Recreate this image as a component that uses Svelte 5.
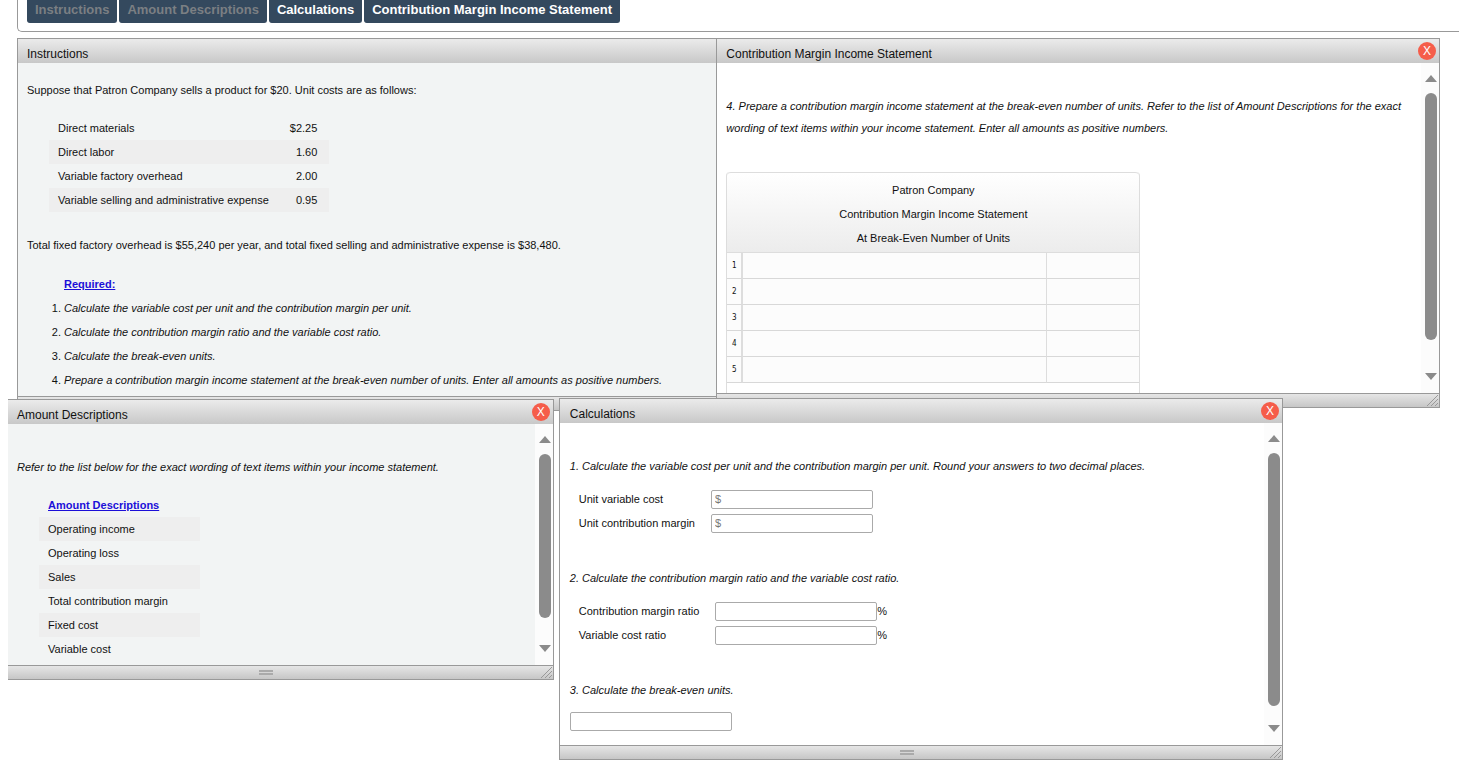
<script lang="ts">
	/**
	 * Worksheet desktop: a strip of tabs over four overlapping windows. Each
	 * window has a title bar, an optional close button and a footer for resizing.
	 */
	import type { Snippet } from 'svelte';

	const tabs = [
		{ name: 'Instructions', open: true },
		{ name: 'Amount Descriptions', open: true },
		{ name: 'Calculations', open: false },
		{ name: 'Contribution Margin Income Statement', open: false }
	];

	const costs = [
		['Direct materials', '$2.25'],
		['Direct labor', '1.60'],
		['Variable factory overhead', '2.00'],
		['Variable selling and administrative expense', '0.95']
	];

	const required = [
		'Calculate the variable cost per unit and the contribution margin per unit.',
		'Calculate the contribution margin ratio and the variable cost ratio.',
		'Calculate the break-even units.',
		'Prepare a contribution margin income statement at the break-even number of units. Enter all amounts as positive numbers.'
	];

	const descriptions = [
		'Operating income',
		'Operating loss',
		'Sales',
		'Total contribution margin',
		'Fixed cost',
		'Variable cost'
	];

	let rows = $state([1, 2, 3, 4, 5].map((n) => ({ n, text: '', amount: '' })));
	let answers = $state({ unitCost: '', unitMargin: '', marginRatio: '', costRatio: '', units: '' });
</script>

{#snippet pane(id: string, title: string, content: Snippet, scrolls: boolean, grip: boolean)}
	<section class="window {id}" aria-labelledby="{id}-title">
		<header>
			<h2 id="{id}-title">{title}</h2>
			{#if scrolls}
				<button class="close" aria-label="Close {title}">X</button>
			{/if}
		</header>
		<div class="body">
			<div class="content">{@render content()}</div>
			{#if scrolls}
				<div class="scrollbar" aria-hidden="true">
					<svg viewBox="0 0 12 7"><path d="M6 0 12 7H0Z" /></svg>
					<div class="track"><div class="thumb"></div></div>
					<svg viewBox="0 0 12 7"><path d="M0 0H12L6 7Z" /></svg>
				</div>
			{/if}
		</div>
		<footer>
			{#if grip}<span class="grip"></span>{/if}
			<svg class="corner" viewBox="0 0 13 13" aria-hidden="true">
				<path d="M1 12 12 1M5 12 12 5M9 12 12 9" />
			</svg>
		</footer>
	</section>
{/snippet}

{#snippet instructions()}
	<p>Suppose that Patron Company sells a product for $20. Unit costs are as follows:</p>
	<table class="striped costs">
		<tbody>
			{#each costs as [label, amount]}
				<tr><td>{label}</td><td class="amount">{amount}</td></tr>
			{/each}
		</tbody>
	</table>
	<p>
		Total fixed factory overhead is $55,240 per year, and total fixed selling and administrative
		expense is $38,480.
	</p>
	<div class="required" id="required">
		<a href="#required">Required:</a>
		<ol>
			{#each required as step}
				<li><em>{step}</em></li>
			{/each}
		</ol>
	</div>
{/snippet}

{#snippet statement()}
	<p class="question">
		4. Prepare a contribution margin income statement at the break-even number of units. Refer to the
		list of Amount Descriptions for the exact wording of text items within your income statement. Enter
		all amounts as positive numbers.
	</p>
	<table class="sheet">
		<thead>
			<tr>
				<th colspan="3">
					<div>Patron Company</div>
					<div>Contribution Margin Income Statement</div>
					<div>At Break-Even Number of Units</div>
				</th>
			</tr>
		</thead>
		<tbody>
			{#each rows as row}
				<tr>
					<td class="num">{row.n}</td>
					<td><input aria-label="Description, row {row.n}" bind:value={row.text} /></td>
					<td class="value"><input aria-label="Amount, row {row.n}" bind:value={row.amount} /></td>
				</tr>
			{/each}
		</tbody>
		<tfoot>
			<tr><td colspan="3"></td></tr>
		</tfoot>
	</table>
{/snippet}

{#snippet amounts()}
	<p class="question">
		Refer to the list below for the exact wording of text items within your income statement.
	</p>
	<table class="striped names" id="descriptions">
		<thead>
			<tr><th><a href="#descriptions">Amount Descriptions</a></th></tr>
		</thead>
		<tbody>
			{#each descriptions as name}
				<tr><td>{name}</td></tr>
			{/each}
		</tbody>
	</table>
{/snippet}

{#snippet calculations()}
	<p class="question">
		1. Calculate the variable cost per unit and the contribution margin per unit. Round your answers to
		two decimal places.
	</p>
	<div class="fields">
		<label for="unit-cost">Unit variable cost</label>
		<span><input id="unit-cost" placeholder="$" bind:value={answers.unitCost} /></span>
		<label for="unit-margin">Unit contribution margin</label>
		<span><input id="unit-margin" placeholder="$" bind:value={answers.unitMargin} /></span>
	</div>
	<p class="question">
		2. Calculate the contribution margin ratio and the variable cost ratio.
	</p>
	<div class="fields">
		<label for="margin-ratio">Contribution margin ratio</label>
		<span><input id="margin-ratio" bind:value={answers.marginRatio} />%</span>
		<label for="cost-ratio">Variable cost ratio</label>
		<span><input id="cost-ratio" bind:value={answers.costRatio} />%</span>
	</div>
	<p class="question"><label for="units">3. Calculate the break-even units.</label></p>
	<div class="single"><input id="units" bind:value={answers.units} /></div>
{/snippet}

<main>
	<nav>
		{#each tabs as tab}
			<button class="tab" disabled={tab.open}>{tab.name}</button>
		{/each}
	</nav>

	{@render pane('instructions', 'Instructions', instructions, false, false)}
	{@render pane('statement', 'Contribution Margin Income Statement', statement, true, false)}
	{@render pane('amounts', 'Amount Descriptions', amounts, true, true)}
	{@render pane('calculations', 'Calculations', calculations, true, true)}
</main>

<style>
	:global(body) {
		background: #fff;
	}
	main {
		position: relative;
		min-height: 100vh;
		overflow: hidden;
		font: 11px/24px 'Liberation Sans', Arial, sans-serif;
		color: #111;
	}
	nav {
		display: flex;
		gap: 2px;
		height: 32px;
		margin-left: 17px;
		padding-left: 9px;
		box-sizing: border-box;
		border: solid #999;
		border-width: 0 0 1px 1px;
		border-bottom-left-radius: 5px;
	}
	.tab {
		height: 23px;
		padding: 0 7px 3px;
		border: 1px solid #34495e;
		border-top: 0;
		border-radius: 0 0 3px 3px;
		background: #34495e;
		color: #fff;
		font: bold 13px/20px 'Liberation Sans', Arial, sans-serif;
		white-space: nowrap;
	}
	.tab:disabled {
		color: #7b7f83;
	}

	.window {
		position: absolute;
		box-sizing: border-box;
		border: 1px solid #999;
		background: #fff;
	}
	.instructions {
		left: 17px;
		top: 38px;
		width: 48%;
		min-width: 700px;
	}
	.statement {
		left: 49.1%;
		right: 19px;
		top: 38px;
	}
	.amounts {
		left: 8px;
		top: 399px;
		width: 37.4%;
		border-left: 0;
	}
	.calculations {
		left: 38.3%;
		right: 176px;
		top: 398px;
	}
	header {
		display: flex;
		justify-content: space-between;
		align-items: center;
		height: 24px;
		padding: 0 3px 0 9px;
		background: linear-gradient(#ebebeb, #c8c8c8);
	}
	h2 {
		margin: 0;
		padding-top: 6px;
		font-size: 12px;
		line-height: 18px;
		font-weight: normal;
	}
	.close {
		width: 18px;
		height: 18px;
		padding: 0;
		border: 0;
		border-radius: 50%;
		background: #f55d4a;
		color: #fff;
		font: 12px/18px 'Liberation Sans', Arial, sans-serif;
	}
	.body {
		display: flex;
		overflow: hidden;
	}
	.instructions .body,
	.amounts .body {
		background: #f2f4f4;
	}
	.instructions .body {
		height: 333px;
	}
	.statement .body {
		height: 330px;
	}
	.amounts .body {
		height: 241px;
	}
	.calculations .body {
		height: 322px;
	}
	.content {
		flex: 1;
		min-width: 0;
		padding: 0 10px 0 9px;
	}
	.instructions .content {
		padding-top: 15px;
	}
	.calculations header,
	.calculations .content {
		padding-left: 10px;
	}
	.scrollbar {
		display: flex;
		flex-direction: column;
		box-sizing: border-box;
		width: 18px;
		padding: 12px 2px 13px 4px;
		background: #fcfcfc;
	}
	.scrollbar svg {
		width: 12px;
		height: 7px;
		fill: #8b8b8b;
	}
	.track {
		flex: 1;
		padding: 11px 0;
	}
	.thumb {
		height: 92%;
		border-radius: 6px;
		background: #8b8b8b;
	}
	.amounts .thumb {
		height: 91%;
	}
	.calculations .thumb {
		height: 97%;
	}
	footer {
		position: relative;
		display: flex;
		justify-content: center;
		align-items: center;
		height: 13px;
		border-top: 1px solid #999;
		background: linear-gradient(#e6e6e6, #c6c6c6);
	}
	.grip {
		width: 14px;
		height: 1px;
		margin-right: 28px;
		border: solid #aaa;
		border-width: 2px 0;
	}
	.corner {
		position: absolute;
		right: 0;
		bottom: 0;
		width: 13px;
		height: 13px;
		fill: none;
		stroke: #999;
	}

	p {
		margin: 0;
	}
	.question {
		padding-top: 32px;
		line-height: 22px;
		font-style: italic;
	}
	a {
		color: #1c0fd8;
		font-weight: bold;
	}
	.required {
		padding: 15px 0 0 37px;
	}
	ol {
		margin: 0;
		padding: 0;
	}
	table {
		border-collapse: collapse;
	}
	.striped td,
	.striped th {
		padding: 0 12px 0 9px;
		text-align: left;
	}
	.costs {
		margin: 14px 0 21px 22px;
	}
	.costs tr:nth-child(even),
	.names tbody tr:nth-child(odd) {
		background: #eee;
	}
	.costs .amount {
		text-align: right;
	}
	.names {
		min-width: 161px;
		margin: 15px 0 0 22px;
	}

	.sheet {
		width: 414px;
		margin-top: 33px;
		border: 1px solid #ddd;
		border-top: 0;
		border-collapse: separate;
		border-spacing: 0;
		border-radius: 4px 4px 0 0;
		box-sizing: border-box;
	}
	.sheet th {
		padding: 5px 0 2px;
		border: solid #ddd;
		border-width: 1px 0;
		border-radius: 4px 4px 0 0;
		background: linear-gradient(#fff, #ececec);
		font-weight: normal;
	}
	.sheet td {
		height: 25px;
		padding: 0;
		border-bottom: 1px solid #d8d8d8;
		background: #fcfcfc;
		line-height: 20px;
	}
	.sheet tfoot td {
		border: 0;
		background: #fff;
	}
	.sheet .num {
		width: 14px;
		border-right: 2px solid #ddd;
		font-family: 'DejaVu Sans Condensed', 'DejaVu Sans', sans-serif;
		font-size: 8px;
		text-align: center;
	}
	.sheet .value {
		width: 92px;
		border-left: 1px solid #ddd;
	}
	.sheet input {
		display: block;
		box-sizing: border-box;
		width: 100%;
		border: 0;
		background: none;
	}

	.fields {
		display: grid;
		grid-template-columns: max-content 1fr;
		column-gap: 16px;
		padding: 10px 0 0 9px;
	}
	.fields span {
		display: flex;
		align-items: center;
	}
	.fields input,
	.single input {
		box-sizing: border-box;
		width: 162px;
		height: 19px;
		padding: 0 3px;
		border: 1px solid #aaa;
		border-radius: 2px;
		font: 11px 'Liberation Sans', Arial, sans-serif;
	}
	input::placeholder {
		color: #777;
	}
	.single {
		display: flex;
		padding-top: 11px;
	}
</style>
